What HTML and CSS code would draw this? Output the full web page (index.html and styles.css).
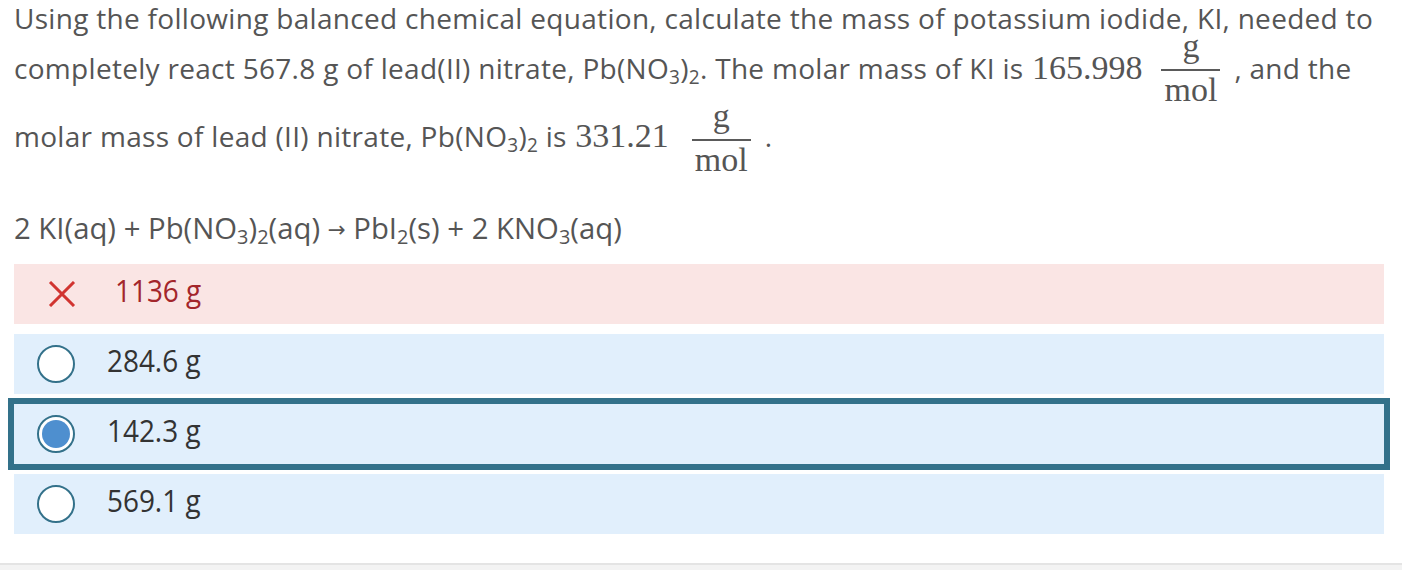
FILE: index.html
```html
<!DOCTYPE html>
<html lang="en">
<head>
<meta charset="utf-8">
<title>Question</title>
<link rel="stylesheet" href="styles.css">
</head>
<body>
<div class="page">
  <div class="question">
    <p class="q-line l1">Using the following balanced chemical equation, calculate the mass of potassium iodide, KI, needed to</p>
    <p class="q-line l2">completely react 567.8 g of lead(II) nitrate, Pb(NO<sub>3</sub>)<sub>2</sub>. The molar mass of KI is <span class="math"><span class="mn">165.998</span><span class="frac"><span class="num">g</span><span class="bar"></span><span class="den">mol</span></span></span><span class="after-frac">, and the</span></p>
    <p class="q-line l3">molar mass of lead (II) nitrate, Pb(NO<sub>3</sub>)<sub>2</sub> is <span class="math"><span class="mn">331.21</span><span class="frac frac-low"><span class="num">g</span><span class="bar"></span><span class="den">mol</span></span></span><span class="after-frac dot">.</span></p>
  </div>
  <p class="equation"><span class="eq-text">2 KI(aq) + Pb(NO<sub>3</sub>)<sub>2</sub>(aq) <span class="arrow">→</span> PbI<sub>2</sub>(s) + 2 KNO<sub>3</sub>(aq)</span></p>
  <ul class="options">
    <li class="option incorrect">
      <svg class="x-icon" width="28" height="26" viewBox="0 0 28 26" aria-hidden="true"><path d="M2 1 L26 25 M26 1 L2 25" stroke="#d13430" stroke-width="3" fill="none"/></svg>
      <span class="label">1136 g</span>
    </li>
    <li class="option">
      <span class="radio"></span>
      <span class="label">284.6 g</span>
    </li>
    <li class="option selected">
      <span class="radio checked"></span>
      <span class="label">142.3 g</span>
    </li>
    <li class="option">
      <span class="radio"></span>
      <span class="label">569.1 g</span>
    </li>
  </ul>
</div>
<div class="footer-bar"></div>
</body>
</html>
```

FILE: styles.css
```css
html, body {
  margin: 0;
  padding: 0;
  background: #ffffff;
}

body {
  font-family: "Open Sans", "Noto Sans", sans-serif;
  color: #555555;
  overflow: hidden;
}

.page {
  width: 1370px;
  margin-left: 14px;
}

.question {
  font-size: 28px;
  letter-spacing: 0.3px;
}

.q-line {
  margin: 0;
  line-height: 36px;
  white-space: nowrap;
}

.l2 {
  margin-top: 1px;
}

.l3 {
  margin-top: 7.5px;
}

sub {
  font-size: 0.68em;
  line-height: 0;
  vertical-align: -0.25em;
}

.math {
  font-family: "Liberation Serif", "Times New Roman", serif;
  font-size: 34px;
  letter-spacing: 0;
  color: #555555;
}

.mn {
  margin-left: 1px;
}

.frac {
  display: inline-block;
  vertical-align: -22px;
  margin-left: 19px;
  text-align: center;
}

.frac-low {
  vertical-align: -24px;
  margin-left: 23px;
}

.frac .num,
.frac .den {
  display: block;
  line-height: 18px;
  padding: 0 3px;
}

.frac .num {
  padding-bottom: 14px;
}

.frac .den {
  padding-top: 10px;
}

.frac .bar {
  display: block;
  height: 2px;
  background: #5a5a5a;
}

.after-frac {
  margin-left: 14px;
}

.dot {
  margin-left: 14px;
}

.equation {
  margin: 41px 0 0;
  font-size: 30px;
  line-height: 36px;
  white-space: nowrap;
}

.eq-text {
  display: inline-block;
  transform: scaleX(0.977);
  transform-origin: left center;
}

.arrow {
  font-family: "DejaVu Sans", sans-serif;
  font-size: 22px;
  vertical-align: 2px;
}

.options {
  list-style: none;
  margin: 16.5px 0 0;
  padding: 0;
  display: flex;
  flex-direction: column;
  gap: 10px;
}

.option {
  height: 60px;
  display: flex;
  align-items: center;
  background: #e1effc;
  padding-left: 23px;
  box-sizing: border-box;
}

.option.incorrect {
  background: #fae5e4;
  padding-left: 34px;
}

.option.selected {
  outline: 6px solid #33718a;
}

.x-icon {
  flex: none;
  margin-right: 39px;
}

.radio {
  flex: none;
  width: 38px;
  height: 38px;
  box-sizing: border-box;
  border: 2px solid #33718a;
  border-radius: 50%;
  background: #ffffff;
  margin-right: 32px;
  display: flex;
  align-items: center;
  justify-content: center;
}

.radio.checked::after {
  content: "";
  width: 28px;
  height: 28px;
  border-radius: 50%;
  background: #4e8fcf;
}

.label {
  display: inline-block;
  font-size: 31px;
  line-height: 36px;
  color: #333333;
  transform: scaleX(0.9);
  transform-origin: left center;
  white-space: nowrap;
  margin-bottom: 8px;
}

.incorrect .label {
  color: #a3262b;
}

.footer-bar {
  margin-top: 29px;
  height: 20px;
  border-top: 2px solid #e4e4e4;
  background: #f3f3f3;
}
```
